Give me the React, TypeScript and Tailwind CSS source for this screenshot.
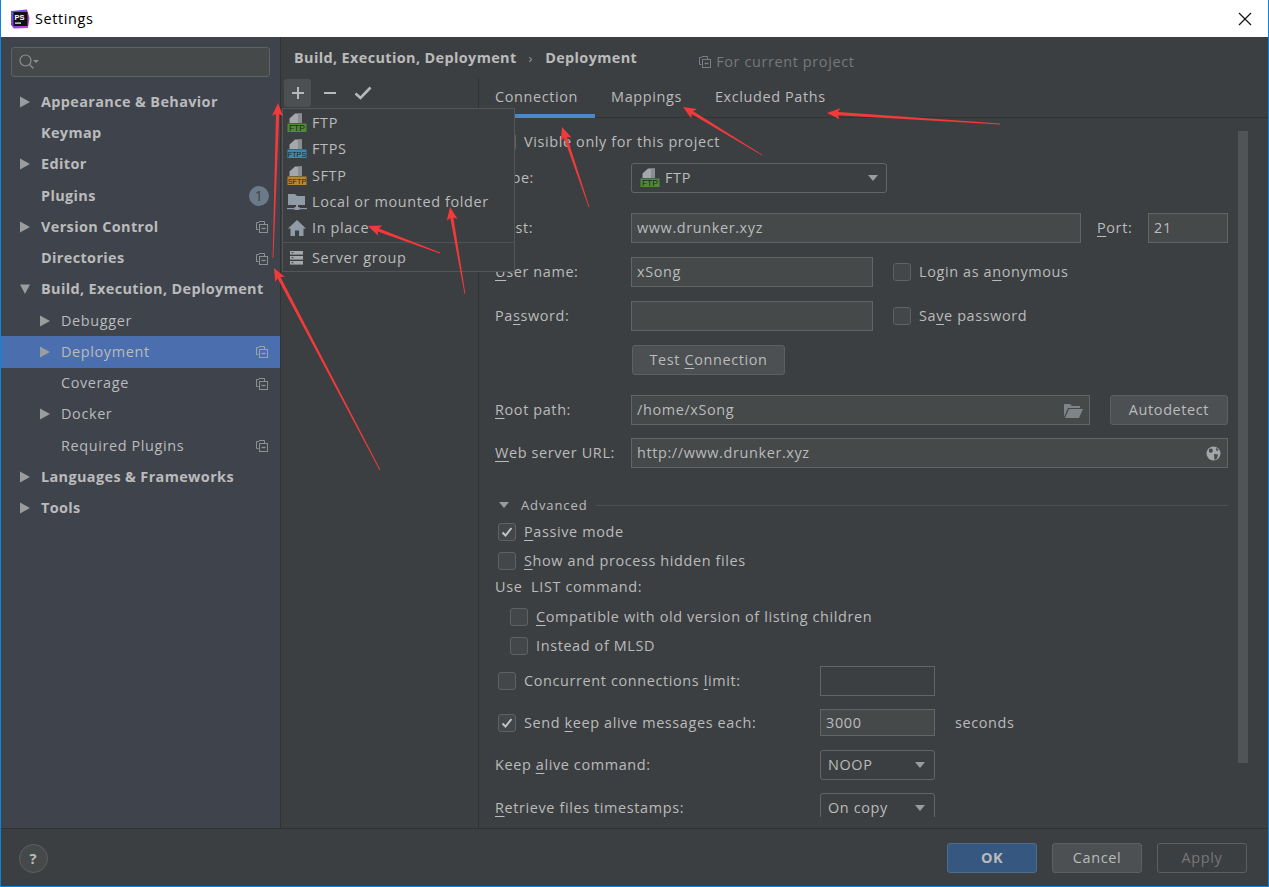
import React from "react";

const FONT = "[font-family:'Open_Sans','Noto_Sans',sans-serif]";

const Mn = ({ children }: { children: React.ReactNode }) => (
  <span className="underline underline-offset-[3px] decoration-1">{children}</span>
);

const Tri = ({ down = false, cls = "" }: { down?: boolean; cls?: string }) => (
  <svg width="12" height="12" viewBox="0 0 12 12" className={cls}>
    <polygon points={down ? "1,1.5 11,1.5 6,11" : "1,0.5 11,6 1,11.5"} fill="#9a9c9e" />
  </svg>
);

const ProjIcon = ({ color = "#8c9094" }: { color?: string }) => (
  <svg width="12" height="12" viewBox="0 0 12 12" fill="none" stroke={color} strokeWidth="1">
    <path d="M3 1.5H0.5V8.5H2.5" />
    <path d="M3 .5H8.5V3" />
    <rect x="3.5" y="3.5" width="8" height="8" />
    <path d="M5.5 7.5H9.5" strokeWidth="1.4" />
  </svg>
);

const ServerIcon = ({ label, color }: { label: string; color: string }) => (
  <svg width="20" height="20" viewBox="0 0 20 20" className="shrink-0">
    <path d="M8 0.5H15V10H2.5V5.5Z" fill="#a4a8ab" />
    <path d="M11 0.5H15V10H11Z" fill="#8a8e92" />
    <rect x="0.5" y="10.5" width="19" height="8.5" fill={color} />
    <text
      x="10"
      y="17.6"
      textAnchor="middle"
      letterSpacing="0"
      fontSize={label.length > 3 ? 7.2 : 8.6}
      fontFamily="'Liberation Sans',sans-serif"
      fill="#1f2426"
    >
      {label}
    </text>
  </svg>
);

const Folder = () => (
  <svg width="20" height="20" viewBox="0 0 20 20" fill="#8f9ba6" className="shrink-0">
    <path d="M1 2H8L10 4H18V13H1Z" />
    <rect x="9" y="13" width="2" height="3" />
    <rect x="0" y="16" width="20" height="1.2" />
    <rect x="7.5" y="15" width="5" height="3" />
  </svg>
);

const Home = () => (
  <svg width="20" height="20" viewBox="0 0 20 20" fill="#8f9ba6" className="shrink-0">
    <path d="M10 2L19 10.5H16.5V18H12V12.5H8V18H3.5V10.5H1Z" />
  </svg>
);

const Group = () => (
  <svg width="20" height="20" viewBox="0 0 20 20" fill="#a5a8aa" className="shrink-0">
    <rect x="3" y="3" width="13" height="3.6" />
    <rect x="3" y="8" width="13" height="3.6" />
    <rect x="3" y="13" width="13" height="3.6" />
    <rect x="4.5" y="4.2" width="2" height="1" fill="#3c3f41" />
    <rect x="4.5" y="9.2" width="2" height="1" fill="#3c3f41" />
    <rect x="4.5" y="14.2" width="2" height="1" fill="#3c3f41" />
  </svg>
);

const Check = ({ checked = false }: { checked?: boolean }) => (
  <span className="w-[18px] h-[18px] shrink-0 rounded-[3px] border border-[#5f6264] bg-[#43474a] flex items-center justify-center">
    {checked && (
      <svg width="12" height="12" viewBox="0 0 12 12" fill="none" stroke="#c4c4c4" strokeWidth="2">
        <path d="M1.5 6.5L4.5 9.5L10.5 2" />
      </svg>
    )}
  </span>
);

const Input = ({ w, h = "h-[30px]", children, right, bg = "bg-[#45494a]" }: { w: string; h?: string; children?: React.ReactNode; right?: React.ReactNode; bg?: string }) => (
  <div className={`${w} ${h} ${bg} shrink-0 border border-[#646464] pl-[5px] pr-[6px] flex items-center justify-between`}>
    <span>{children}</span>
    {right}
  </div>
);

const Caret = () => (
  <svg width="12" height="8" viewBox="0 0 12 8" className="shrink-0">
    <polygon points="1,1 11,1 6,7" fill="#9a9c9e" />
  </svg>
);

const Select = ({ children }: { children: React.ReactNode }) => (
  <div className="w-[115px] h-[30px] shrink-0 rounded-[3px] border border-[#646464] pl-[7px] pr-[8px] flex items-center justify-between">
    <span>{children}</span>
    <Caret />
  </div>
);

const Btn = ({ w, children, cls = "" }: { w: string; children: React.ReactNode; cls?: string }) => (
  <div className={`${w} h-[30px] rounded-[3px] border flex items-center justify-center ${cls}`}>{children}</div>
);

const tree: { label: string; lvl: 0 | 1; arrow?: "r" | "d"; proj?: boolean; badge?: boolean; sel?: boolean }[] = [
  { label: "Appearance & Behavior", lvl: 0, arrow: "r" },
  { label: "Keymap", lvl: 0 },
  { label: "Editor", lvl: 0, arrow: "r" },
  { label: "Plugins", lvl: 0, badge: true },
  { label: "Version Control", lvl: 0, arrow: "r", proj: true },
  { label: "Directories", lvl: 0, proj: true },
  { label: "Build, Execution, Deployment", lvl: 0, arrow: "d" },
  { label: "Debugger", lvl: 1, arrow: "r" },
  { label: "Deployment", lvl: 1, arrow: "r", proj: true, sel: true },
  { label: "Coverage", lvl: 1, proj: true },
  { label: "Docker", lvl: 1, arrow: "r" },
  { label: "Required Plugins", lvl: 1, proj: true },
  { label: "Languages & Frameworks", lvl: 0, arrow: "r" },
  { label: "Tools", lvl: 0, arrow: "r" },
];

function arrowPts(x1: number, y1: number, x2: number, y2: number) {
  const L = Math.hypot(x2 - x1, y2 - y1);
  const ux = (x2 - x1) / L;
  const uy = (y2 - y1) / L;
  const nx = -uy;
  const ny = ux;
  const b = 13;
  const bx = x2 - ux * b;
  const by = y2 - uy * b;
  const p = (x: number, y: number) => `${x.toFixed(1)},${y.toFixed(1)}`;
  return [
    p(x1 + nx * 0.4, y1 + ny * 0.4),
    p(bx + nx * 1.6 + ux * 2, by + ny * 1.6 + uy * 2),
    p(bx + nx * 5.5, by + ny * 5.5),
    p(x2, y2),
    p(bx - nx * 5.5, by - ny * 5.5),
    p(bx - nx * 1.6 + ux * 2, by - ny * 1.6 + uy * 2),
    p(x1 - nx * 0.4, y1 - ny * 0.4),
  ].join(" ");
}

const arrows = [
  [273, 258, 278, 103],
  [380, 470, 274, 268],
  [589, 207, 562, 127],
  [762, 155, 683, 107],
  [1000, 124, 827, 113],
  [440, 253, 368, 226],
  [465, 294, 450, 207],
];

const BOLD = "font-bold tracking-[0.37px]";

export default function App() {
  return (
    <div className={`${FONT} relative w-[1269px] h-[887px] flex flex-col overflow-hidden border-x border-b border-[#0b84e0] bg-[#3c3f41] text-[#bbbbbb] text-[14.45px] tracking-[0.62px] leading-[20px]`}>
      {/* title bar */}
      <div className="h-[37px] shrink-0 bg-white flex items-center pl-[9px] pr-[16px] text-black">
        <svg width="20" height="20" viewBox="0 0 20 20" className="shrink-0">
          <defs>
            <linearGradient id="ps" x1="0" y1="0" x2="1" y2="1">
              <stop offset="0" stopColor="#4a5cf0" />
              <stop offset="0.5" stopColor="#8a3ee0" />
              <stop offset="1" stopColor="#d04ac8" />
            </linearGradient>
          </defs>
          <path d="M1 2L17 0.5L19.5 9L18 19L4 19.5L1 16Z" fill="url(#ps)" />
          <rect x="3.5" y="3" width="14" height="14" fill="#111" />
          <text x="4.5" y="10.5" fontSize="7.5" fontWeight="700" letterSpacing="0" fontFamily="'Liberation Sans',sans-serif" fill="#fff">PS</text>
          <rect x="5" y="13.5" width="6" height="1.2" fill="#fff" />
        </svg>
        <span className="ml-[5px] flex-1">Settings</span>
        <svg width="14" height="14" viewBox="0 0 14 14" stroke="#111" strokeWidth="1.2">
          <path d="M1 1L13 13M13 1L1 13" />
        </svg>
      </div>

      {/* body */}
      <div className="flex-1 min-h-0 flex">
        {/* sidebar */}
        <div className="w-[279px] shrink-0 bg-[#3e434c] border-r border-[#323232] box-content">
          <div className="pt-[10px] pl-[10px] pr-[10px] pb-[9.3px]">
            <div className="h-[30px] rounded-[3px] border border-[#5e6264] bg-[#45494a] flex items-center pl-[6px]">
              <svg width="22" height="18" viewBox="0 0 22 18" fill="none" stroke="#8e9092" strokeWidth="1.2">
                <circle cx="7.5" cy="7.5" r="5.5" />
                <path d="M11.5 11.5L15.5 15.5" />
                <polygon points="15,7 21,7 18,10" fill="#8e9092" stroke="none" />
              </svg>
            </div>
          </div>
          <div>
            {tree.map((t) => (
              <div
                key={t.label}
                className={`h-[31.25px] relative flex items-center ${t.lvl ? "pl-[38px]" : "pl-[18px]"} ${t.sel ? "bg-[#4b6eaf]" : ""}`}
              >
                <span className="w-[12px] mr-[10px] flex">{t.arrow && <Tri down={t.arrow === "d"} />}</span>
                <span className={t.lvl ? "" : BOLD}>{t.label}</span>
                {t.proj && (
                  <span className="absolute right-[12px] top-[10px] flex">
                    <ProjIcon color={t.sel ? "#9aa3b0" : "#8c9094"} />
                  </span>
                )}
                {t.badge && (
                  <span className="absolute right-[11px] top-[6px] w-[20px] h-[20px] rounded-full bg-[#6b7a88] text-[#3c3f41] text-[14px] flex items-center justify-center">
                    1
                  </span>
                )}
              </div>
            ))}
          </div>
        </div>

        {/* main */}
        <div className="flex-1 min-w-0 flex flex-col">
          <div className="h-[41px] shrink-0 flex items-center pl-[13px] pt-[1px]">
            <span className={BOLD}>Build, Execution, Deployment</span>
            <span className="mx-[12px] text-[#9a9a9a] text-[13px]">›</span>
            <span className={BOLD}>Deployment</span>
            <span className="ml-[62px] flex items-center gap-[5px] text-[#787878] pt-[8px]">
              <ProjIcon color="#7a7e82" />
              For current project
            </span>
          </div>
          <div className="flex-1 min-h-0 flex">
            {/* server list */}
            <div className="w-[194px] shrink-0 border-r border-[#323232] box-content pt-[1px] pl-[3px]">
              <div className="flex items-center">
                <div className="w-[27px] h-[28px] rounded-[3px] bg-[#4c5052] flex items-center justify-center">
                  <svg width="14" height="14" viewBox="0 0 14 14" stroke="#b8b8b8" strokeWidth="2"><path d="M7 1V13M1 7H13" /></svg>
                </div>
                <svg width="14" height="14" viewBox="0 0 14 14" stroke="#b8b8b8" strokeWidth="2" className="ml-[12px]"><path d="M1 7H13" /></svg>
                <svg width="18" height="14" viewBox="0 0 18 14" fill="none" stroke="#b8b8b8" strokeWidth="2.6" className="ml-[17px]"><path d="M1.5 7.5L6.5 12L16.5 1.5" /></svg>
              </div>
            </div>
            {/* connection panel */}
            <div className="flex-1 min-w-0 relative flex flex-col">
              <div className="h-[40px] shrink-0 flex border-b border-[#323232] pl-[16px] gap-[33px] relative">
                <span className="pt-[9px]">Connection</span>
                <span className="pt-[9px]">Mappings</span>
                <span className="pt-[9px]">Excluded Paths</span>
                <span className="absolute left-0 bottom-[-1px] w-[116px] h-[4px] bg-[#4a88c7]" />
              </div>
              <div className="flex-1 min-h-0 pl-[16px] pr-[40px] pb-[11px] flex flex-col">
                <div className="flex-1 min-h-0 overflow-hidden">
                  <div className="h-[30px] mt-[9px] flex items-center pl-[3px] gap-[8px]"><Check />Visible only for this project</div>
                  <div className="h-[30px] mt-[6px] flex items-center">
                    <span className="w-[136px] shrink-0">Type:</span>
                    <div className="w-[256px] h-[30px] rounded-[3px] border border-[#646464] pl-[8px] pr-[7px] flex items-center justify-between">
                      <span className="flex items-center gap-[5px]"><ServerIcon label="FTP" color="#4f8a3a" />FTP</span>
                      <Caret />
                    </div>
                  </div>
                  <div className="h-[30px] mt-[20px] flex items-center">
                    <span className="w-[136px] shrink-0">Host:</span>
                    <Input w="w-[450px]">www.drunker.xyz</Input>
                    <span className="ml-[16px] w-[51px]"><Mn>P</Mn>ort:</span>
                    <Input w="w-[80px]">21</Input>
                  </div>
                  <div className="h-[30px] mt-[14px] flex items-center">
                    <span className="w-[136px] shrink-0"><Mn>U</Mn>ser name:</span>
                    <Input w="w-[242px]">xSong</Input>
                    <span className="ml-[20px] flex items-center gap-[8px]"><Check /><span>Login as a<Mn>n</Mn>onymous</span></span>
                  </div>
                  <div className="h-[30px] mt-[14px] flex items-center">
                    <span className="w-[136px] shrink-0">Pa<Mn>s</Mn>sword:</span>
                    <Input w="w-[242px]" />
                    <span className="ml-[20px] flex items-center gap-[8px]"><Check /><span>Sa<Mn>v</Mn>e password</span></span>
                  </div>
                  <div className="h-[30px] mt-[14px] pl-[137px] flex">
                    <Btn w="w-[153px]" cls="bg-[#4c5052] border-[#5e6060]"><span>Test <Mn>C</Mn>onnection</span></Btn>
                  </div>
                  <div className="h-[30px] mt-[20px] flex items-center">
                    <span className="w-[136px] shrink-0"><Mn>R</Mn>oot path:</span>
                    <Input
                      w="w-[459px]"
                      right={
                        <svg width="19" height="15" viewBox="0 0 19 15" fill="#7f8488">
                          <path d="M0 1H6L8 3H16V5H4L0 14Z" />
                          <path d="M5 6H19L15 15H1Z" />
                        </svg>
                      }
                    >
                      /home/xSong
                    </Input>
                    <Btn w="w-[118px] ml-[20px]" cls="bg-[#4c5052] border-[#5e6060]">Autodetect</Btn>
                  </div>
                  <div className="h-[30px] mt-[13px] flex items-center">
                    <span className="w-[136px] shrink-0"><Mn>W</Mn>eb server URL:</span>
                    <Input
                      w="w-[597px]"
                      right={
                        <svg width="15" height="15" viewBox="0 0 15 15">
                          <circle cx="7.5" cy="7.5" r="7" fill="#a3a6a8" />
                          <path d="M3 3L6 2.5L7 5L5 7L3 6ZM8 8L12 8.5L11 12.5L8.5 14Z M10 1.5L13 4L10.5 5Z" fill="#45494a" />
                        </svg>
                      }
                    >
                      http://www.drunker.xyz
                    </Input>
                  </div>
                  <div className="h-[20px] mt-[27px] flex items-center pl-[3px]">
                    <Caret />
                    <span className="ml-[11px] text-[13px] tracking-[0.9px]">Advanced</span>
                    <span className="ml-[8px] flex-1 h-px bg-[#4d5052]" />
                  </div>
                  <div className="h-[26px] mt-[4px] flex items-center pl-[3px] gap-[8px]"><Check checked /><span><Mn>P</Mn>assive mode</span></div>
                  <div className="h-[26px] mt-[3px] flex items-center pl-[3px] gap-[8px]"><Check /><span><Mn>S</Mn>how and process hidden files</span></div>
                  <div className="h-[26px] flex items-center">Use&nbsp; LIST command:</div>
                  <div className="h-[26px] mt-[4px] flex items-center pl-[15px] gap-[8px]"><Check /><span><Mn>C</Mn>ompatible with old version of listing children</span></div>
                  <div className="h-[26px] mt-[3px] flex items-center pl-[15px] gap-[8px]"><Check />Instead of MLSD</div>
                  <div className="h-[30px] mt-[7px] flex items-center">
                    <span className="w-[325px] shrink-0 pl-[3px] flex items-center gap-[8px]"><Check /><span>Concurrent connections <Mn>l</Mn>imit:</span></span>
                    <Input w="w-[115px]" bg="bg-transparent" />
                  </div>
                  <div className="h-[27px] mt-[13px] flex items-center">
                    <span className="w-[325px] shrink-0 pl-[3px] flex items-center gap-[8px]"><Check checked /><span>Send <Mn>k</Mn>eep alive messages each:</span></span>
                    <Input w="w-[115px]" h="h-[27px]">3000</Input>
                    <span className="ml-[20px]">seconds</span>
                  </div>
                  <div className="h-[30px] mt-[14px] flex items-center">
                    <span className="w-[325px] shrink-0">Keep <Mn>a</Mn>live command:</span>
                    <Select>NOOP</Select>
                  </div>
                  <div className="h-[30px] mt-[13px] flex items-center">
                    <span className="w-[325px] shrink-0"><Mn>R</Mn>etrieve files timestamps:</span>
                    <Select>On copy</Select>
                  </div>
                </div>
              </div>
              {/* scrollbar */}
              <div className="absolute right-[20px] top-[53px] w-[10px] h-[632px] bg-[#515355]" />
            </div>
          </div>
        </div>
      </div>

      {/* footer */}
      <div className="h-[58px] shrink-0 border-t border-[#323232] flex items-center pl-[18px] pr-[21px] pt-[1px]">
        <div className="w-[29px] h-[29px] rounded-full bg-[#45494a] border border-[#5e6060] flex items-center justify-center font-bold text-[15px]">?</div>
        <div className="flex-1" />
        <Btn w="w-[90px]" cls={`bg-[#365880] border-[#4c708c] ${BOLD}`}>OK</Btn>
        <Btn w="w-[90px] ml-[15px]" cls="bg-[#4c5052] border-[#5e6060]">Cancel</Btn>
        <Btn w="w-[90px] ml-[15px]" cls="border-[#5e6060] text-[#777777]">Apply</Btn>
      </div>

      {/* popup menu */}
      <div className="absolute left-[281px] top-[108px] w-[233px] h-[164px] border border-[#555555] bg-[#3c3f41] pl-[4px] pt-[1px]">
        {[
          { l: "FTP", i: <ServerIcon label="FTP" color="#4f8a3a" /> },
          { l: "FTPS", i: <ServerIcon label="FTPS" color="#3a8ab0" /> },
          { l: "SFTP", i: <ServerIcon label="SFTP" color="#b8862e" /> },
          { l: "Local or mounted folder", i: <Folder /> },
          { l: "In place", i: <Home /> },
        ].map((m) => (
          <div key={m.l} className="h-[26.25px] flex items-center gap-[5px]">
            {m.i}
            {m.l}
          </div>
        ))}
        <div className="h-px bg-[#505254] ml-[-4px] mt-[1px]" />
        <div className="h-[29px] flex items-center gap-[5px]"><Group />Server group</div>
      </div>

      {/* hand-drawn annotation arrows */}
      <svg className="absolute left-[-1px] top-0 pointer-events-none" width="1269" height="887">
        {arrows.map((a, i) => (
          <polygon key={i} points={arrowPts(a[0], a[1], a[2], a[3])} fill="#f23a3a" />
        ))}
      </svg>
    </div>
  );
}
